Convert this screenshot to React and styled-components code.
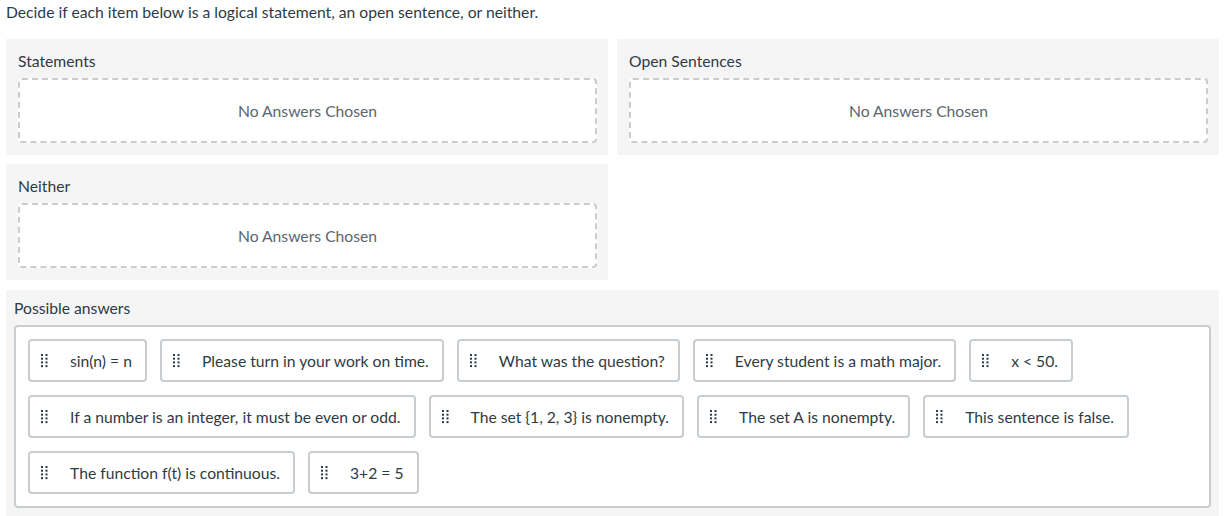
import React from "react";
import styled, { createGlobalStyle } from "styled-components";

const Global = createGlobalStyle`
  html, body { margin: 0; padding: 0; background: #fff; }
  body { font-family: Lato, "Noto Sans", sans-serif; color: #2d3b45; }
`;

const Page = styled.div`
  padding: 0 6px;
`;

const Prompt = styled.div`
  font-size: 15.7px;
  line-height: 24px;
  margin: 0 0 15px;
`;

const Grid = styled.div`
  display: grid;
  grid-template-columns: 1fr 1fr;
  gap: 9px;
`;

const Panel = styled.div`
  background: #f5f5f5;
  padding: 12px 11px 12px 12px;
`;

const Label = styled.div`
  font-size: 15.7px;
  line-height: 20px;
  margin-bottom: 7px;
`;

const DropZone = styled.div`
  height: 61px;
  border: 2px dashed #c7cdd1;
  border-radius: 4px;
  background: #fff;
  display: flex;
  align-items: center;
  justify-content: center;
  font-size: 15.7px;
  color: #5b6670;
`;

const AnswersPanel = styled.div`
  background: #f5f5f5;
  padding: 8px;
  margin-top: 10px;
`;

const AnswerBox = styled.div`
  background: #fff;
  border: 2px solid #c7cdd1;
  border-radius: 4px;
  padding: 12px;
  display: flex;
  flex-wrap: wrap;
  gap: 13px;
  min-height: 183px;
  box-sizing: border-box;
  align-content: flex-start;
`;

const Chip = styled.div`
  display: flex;
  align-items: center;
  gap: 22px;
  height: 43px;
  box-sizing: border-box;
  border: 2px solid #c7cdd1;
  border-radius: 4px;
  background: #fff;
  padding: 0 13px 0 11px;
  font-size: 15.7px;
  white-space: nowrap;
`;

const Grip = () => (
  <svg width="7" height="14" viewBox="0 0 7 14" aria-hidden="true">
    {[0, 1, 2, 3].map((r) =>
      [0, 1].map((c) => (
        <rect key={`${r}-${c}`} x={c * 4.5} y={r * 3.7} width="2" height="2" fill="#2d3b45" />
      ))
    )}
  </svg>
);

const answers = [
  "sin(n) = n",
  "Please turn in your work on time.",
  "What was the question?",
  "Every student is a math major.",
  "x < 50.",
  "If a number is an integer, it must be even or odd.",
  "The set {1, 2, 3} is nonempty.",
  "The set A is nonempty.",
  "This sentence is false.",
  "The function f(t) is continuous.",
  "3+2 = 5",
];

const Category = ({ title }) => (
  <Panel>
    <Label>{title}</Label>
    <DropZone>No Answers Chosen</DropZone>
  </Panel>
);

export default function App() {
  return (
    <Page>
      <Global />
      <Prompt>Decide if each item below is a logical statement, an open sentence, or neither.</Prompt>
      <Grid>
        <Category title="Statements" />
        <Category title="Open Sentences" />
        <Category title="Neither" />
      </Grid>
      <AnswersPanel>
        <Label>Possible answers</Label>
        <AnswerBox>
          {answers.map((a) => (
            <Chip key={a}>
              <Grip />
              <span>{a}</span>
            </Chip>
          ))}
        </AnswerBox>
      </AnswersPanel>
    </Page>
  );
}
